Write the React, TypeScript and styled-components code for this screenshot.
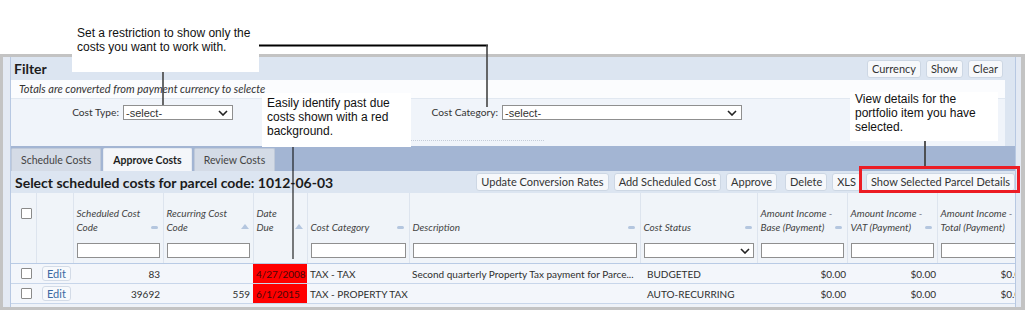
import styled, { createGlobalStyle } from "styled-components";

const GlobalStyle = createGlobalStyle`
  html, body {
    margin: 0;
    padding: 0;
    background: #ffffff;
  }
  body {
    font-family: Lato, "Liberation Sans", sans-serif;
    color: #333;
  }
`;

type SortKind = "dash" | "up" | "none";
type FilterKind = "input" | "select" | "none";

type Column = {
  key: string;
  title: string[];
  width: number;
  sort: SortKind;
  filter: FilterKind;
};

const columns: Column[] = [
  { key: "cb", title: [], width: 25, sort: "none", filter: "none" },
  { key: "edit", title: [], width: 37, sort: "none", filter: "none" },
  { key: "sched", title: ["Scheduled Cost", "Code"], width: 90, sort: "dash", filter: "input" },
  { key: "recur", title: ["Recurring Cost", "Code"], width: 90, sort: "up", filter: "input" },
  { key: "due", title: ["Date", "Due"], width: 54, sort: "up", filter: "none" },
  { key: "cat", title: ["Cost Category"], width: 102, sort: "dash", filter: "input" },
  { key: "desc", title: ["Description"], width: 231, sort: "dash", filter: "input" },
  { key: "status", title: ["Cost Status"], width: 117, sort: "dash", filter: "select" },
  { key: "base", title: ["Amount Income -", "Base (Payment)"], width: 90, sort: "dash", filter: "input" },
  { key: "vat", title: ["Amount Income -", "VAT (Payment)"], width: 90, sort: "dash", filter: "input" },
  { key: "total", title: ["Amount Income -", "Total (Payment)"], width: 90, sort: "dash", filter: "input" },
];

const rows = [
  {
    id: 1,
    sched: "83",
    recur: "",
    due: "4/27/2008",
    cat: "TAX - TAX",
    desc: "Second quarterly Property Tax payment for Parce...",
    status: "BUDGETED",
    base: "$0.00",
    vat: "$0.00",
    total: "$0.00",
  },
  {
    id: 2,
    sched: "39692",
    recur: "559",
    due: "6/1/2015",
    cat: "TAX - PROPERTY TAX",
    desc: "",
    status: "AUTO-RECURRING",
    base: "$0.00",
    vat: "$0.00",
    total: "$0.00",
  },
];

const Chevron = () => (
  <svg width="10" height="6" viewBox="0 0 10 6">
    <path d="M1 1 L5 5 L9 1" fill="none" stroke="#222" strokeWidth="1.6" />
  </svg>
);

const App: React.FC = () => {
  return (
    <Page>
      <GlobalStyle />
      <Frame>
        <Panel>
          <FilterSection>
            <FilterHeader>
              <FilterTitle>Filter</FilterTitle>
              <ButtonGroup>
                <Button>Currency</Button>
                <Button>Show</Button>
                <Button>Clear</Button>
              </ButtonGroup>
            </FilterHeader>
            <InfoRow>Totals are converted from payment currency to selecte</InfoRow>
            <FilterFields>
              <FieldLabel>Cost Type:</FieldLabel>
              <FakeSelect>
                <span>-select-</span>
                <Chevron />
              </FakeSelect>
              <FieldLabel>Cost Category:</FieldLabel>
              <FakeSelect>
                <span>-select-</span>
                <Chevron />
              </FakeSelect>
              <Grip />
            </FilterFields>
          </FilterSection>

          <TabBar>
            <Tab>Schedule Costs</Tab>
            <Tab $active>Approve Costs</Tab>
            <Tab>Review Costs</Tab>
          </TabBar>

          <TitleRow>
            <GridTitle>Select scheduled costs for parcel code: 1012-06-03</GridTitle>
            <ButtonGroup>
              <Button>Update Conversion Rates</Button>
              <Button>Add Scheduled Cost</Button>
              <Button>Approve</Button>
              <Button $gapLeft>Delete</Button>
              <Button>XLS</Button>
              <Button>Show Selected Parcel Details</Button>
            </ButtonGroup>
          </TitleRow>

          <TableWrap>
            <Table>
              <colgroup>
                {columns.map((c) => (
                  <col key={c.key} style={{ width: c.width }} />
                ))}
              </colgroup>
              <thead>
                <tr>
                  {columns.map((c) =>
                    c.key === "cb" ? (
                      <HeadCell key={c.key} $checkbox>
                        <Check />
                      </HeadCell>
                    ) : (
                      <HeadCell key={c.key}>
                        <HeadLabel>
                          <HeadText>
                            {c.title.map((t) => (
                              <div key={t}>{t}</div>
                            ))}
                          </HeadText>
                          {c.sort === "dash" && <SortDash />}
                          {c.sort === "up" && <SortUp />}
                        </HeadLabel>
                        {c.filter === "input" && <FilterInput />}
                        {c.filter === "select" && (
                          <FilterSelect>
                            <Chevron />
                          </FilterSelect>
                        )}
                        {c.filter === "none" && <FilterSpacer />}
                      </HeadCell>
                    ),
                  )}
                </tr>
              </thead>
              <tbody>
                {rows.map((r) => (
                  <tr key={r.id}>
                    <Cell $pad={10}>
                      <Check />
                    </Cell>
                    <Cell $pad={6}>
                      <EditButton>Edit</EditButton>
                    </Cell>
                    <Cell $align="right">{r.sched}</Cell>
                    <Cell $align="right">{r.recur}</Cell>
                    <Cell $pastDue>{r.due}</Cell>
                    <Cell>{r.cat}</Cell>
                    <Cell>{r.desc}</Cell>
                    <Cell $pad={7}>{r.status}</Cell>
                    <Cell $align="right" $amount>{r.base}</Cell>
                    <Cell $align="right" $amount>{r.vat}</Cell>
                    <Cell $align="right" $amount>{r.total}</Cell>
                  </tr>
                ))}
              </tbody>
            </Table>
          </TableWrap>
        </Panel>
      </Frame>

      <Connectors width="1025" height="310" viewBox="0 0 1025 310">
        <line x1="163" y1="72" x2="163" y2="105" stroke="#444" strokeWidth="1.6" />
        <line x1="259" y1="45.5" x2="488" y2="45.5" stroke="#000" strokeWidth="2" />
        <line x1="487" y1="45" x2="487" y2="107" stroke="#444" strokeWidth="1.6" />
        <line x1="293" y1="147" x2="293" y2="259" stroke="#111" strokeWidth="1.1" />
        <line x1="925" y1="137" x2="925" y2="167" stroke="#444" strokeWidth="1.8" />
      </Connectors>

      <Callout $left={72} $top={10} $width={187} $height={62} $padTop={16}>
        Set a restriction to show only the
        <br />
        costs you want to work with.
      </Callout>
      <Callout $left={262} $top={93} $width={149} $height={54} $padTop={3}>
        Easily identify past due
        <br />
        costs shown with a red
        <br />
        background.
      </Callout>
      <Callout $left={850} $top={92} $width={148} $height={49} $padTop={0}>
        View details for the
        <br />
        portfolio item you have
        <br />
        selected.
      </Callout>

      <Highlight />
    </Page>
  );
};

export default App;

// --- Styled Components ---

const Page = styled.div`
  position: relative;
  width: 1025px;
  height: 310px;
  padding-top: 54px;
  box-sizing: border-box;
  overflow: hidden;
`;

const Frame = styled.div`
  height: 256px;
  box-sizing: border-box;
  border: 3px solid #c3c3c3;
  border-right-width: 4px;
  background: #e3e9f3;
  padding: 0 5px 0 7px;
`;

const Panel = styled.div`
  height: 100%;
  box-sizing: border-box;
  border-left: 1px solid #b7c8e2;
  border-right: 1px solid #b7c8e2;
  background: #eef2f8;
  display: flex;
  flex-direction: column;
`;

const FilterSection = styled.div`
  background: #dce5f1;
  padding-right: 10px;
`;

const FilterHeader = styled.div`
  height: 23px;
  display: flex;
  align-items: center;
  padding-left: 3px;
  padding-right: 2px;
`;

const FilterTitle = styled.div`
  font-size: 14px;
  font-weight: 700;
  color: #1d1d1d;
`;

const ButtonGroup = styled.div`
  margin-left: auto;
  display: flex;
  gap: 5px;
`;

const Button = styled.button<{ $gapLeft?: boolean }>`
  height: 18px;
  padding: 0 4px;
  margin-left: ${(p) => (p.$gapLeft ? "3px" : "0")};
  font-family: Lato, "Liberation Sans", sans-serif;
  font-size: 11px;
  color: #333;
  background: #f6f8fb;
  border: 1px solid #cdd7e4;
  border-radius: 3px;
  line-height: 16px;
  cursor: pointer;
`;

const InfoRow = styled.div`
  height: 19px;
  box-sizing: border-box;
  background: #fbfcfe;
  border-bottom: 1px solid #e1e8f1;
  padding-left: 8px;
  font-size: 11px;
  font-style: italic;
  line-height: 18px;
  color: #333;
`;

const FilterFields = styled.div`
  position: relative;
  height: 47px;
  box-sizing: border-box;
  background: #f0f4fa;
  padding-top: 6px;
  display: grid;
  grid-template-columns: 108px 110px 261px 240px;
  column-gap: 4px;
  align-items: start;
`;

const FieldLabel = styled.div`
  text-align: right;
  font-size: 10.2px;
  line-height: 15px;
  color: #333;
`;

const FakeSelect = styled.div`
  height: 15px;
  box-sizing: border-box;
  border: 1px solid #8f8f8f;
  background: #fff;
  display: flex;
  align-items: center;
  justify-content: space-between;
  padding: 0 4px 0 2px;
  font-family: "Liberation Sans", sans-serif;
  font-size: 11px;
  color: #333;
`;

const Grip = styled.div`
  position: absolute;
  left: 300px;
  width: 233px;
  top: 41px;
  border-top: 1px dotted #c4ccd8;
`;

const TabBar = styled.div`
  height: 25px;
  box-sizing: border-box;
  background: #a3b5d3;
  padding-top: 2px;
  display: flex;
  gap: 2px;
`;

const Tab = styled.div<{ $active?: boolean }>`
  height: 23px;
  box-sizing: border-box;
  padding: 0 9px;
  display: flex;
  align-items: center;
  font-size: 10.5px;
  font-weight: ${(p) => (p.$active ? 700 : 400)};
  color: ${(p) => (p.$active ? "#1e1e1e" : "#444")};
  background: ${(p) => (p.$active ? "#f4f6fa" : "#d4dbe6")};
  border: 1px solid ${(p) => (p.$active ? "#e6ebf2" : "#bfc9d9")};
  border-bottom: none;
  border-radius: 2px 2px 0 0;
`;

const TitleRow = styled.div`
  height: 22px;
  display: flex;
  align-items: center;
  padding-left: 4px;
  background: #dce5f1;
`;

const GridTitle = styled.div`
  font-size: 14px;
  font-weight: 700;
  color: #1b1b1b;
`;

const TableWrap = styled.div`
  flex: 1;
  overflow: hidden;
`;

const Table = styled.table`
  width: 1016px;
  table-layout: fixed;
  border-collapse: collapse;
  font-size: 10px;
  color: #2e2e2e;
`;

const HeadCell = styled.th<{ $checkbox?: boolean }>`
  height: 70px;
  box-sizing: border-box;
  vertical-align: top;
  text-align: left;
  font-weight: 400;
  background: #f0f4f9;
  border-right: 1px solid #dde4ee;
  border-bottom: 1px solid #b9cbe5;
  padding: ${(p) => (p.$checkbox ? "15px 0 0 10px" : "13px 3px 5px 3px")};
`;

const HeadLabel = styled.div`
  height: 28px;
  display: flex;
  align-items: flex-end;
  justify-content: space-between;
`;

const HeadText = styled.div`
  font-style: italic;
  font-size: 10px;
  line-height: 14px;
  color: #444;
  white-space: nowrap;
`;

const SortDash = styled.span`
  flex: none;
  width: 7px;
  height: 3px;
  border-radius: 2px;
  background: #b4c6df;
  margin: 0 2px 5px 0;
`;

const SortUp = styled.span`
  flex: none;
  width: 0;
  height: 0;
  border-left: 4px solid transparent;
  border-right: 4px solid transparent;
  border-bottom: 5px solid #b4c6df;
  margin: 0 1px 5px 0;
`;

const FilterInput = styled.div`
  margin-top: 9px;
  height: 15px;
  box-sizing: border-box;
  border: 1px solid #8f8f8f;
  background: #fff;
`;

const FilterSelect = styled(FilterInput)`
  display: flex;
  align-items: center;
  justify-content: flex-end;
  padding-right: 3px;
`;

const FilterSpacer = styled.div`
  margin-top: 9px;
  height: 15px;
`;

const Check = styled.div`
  width: 11px;
  height: 11px;
  box-sizing: border-box;
  border: 1px solid #8a8a8a;
  border-radius: 1px;
  background: #fff;
`;

const Cell = styled.td<{ $align?: "left" | "right"; $pad?: number; $pastDue?: boolean; $amount?: boolean }>`
  height: 20px;
  box-sizing: border-box;
  padding: 0 ${(p) => (p.$amount ? 1 : 3)}px 0 ${(p) => p.$pad ?? 3}px;
  text-align: ${(p) => p.$align ?? "left"};
  white-space: nowrap;
  overflow: hidden;
  background: ${(p) => (p.$pastDue ? "#ff0000" : "#f3f6fb")};
  color: ${(p) => (p.$pastDue ? "#4a0808" : "#2e2e2e")};
  border-bottom: 1px solid #c8d6ea;
`;

const EditButton = styled.button`
  height: 15px;
  padding: 0 4px;
  font-family: Lato, "Liberation Sans", sans-serif;
  font-size: 11px;
  line-height: 13px;
  color: #3b6aa3;
  background: #f7f9fc;
  border: 1px solid #d3dbe7;
  border-radius: 3px;
`;

const Connectors = styled.svg`
  position: absolute;
  left: 0;
  top: 0;
  pointer-events: none;
`;

const Callout = styled.div<{ $left: number; $top: number; $width: number; $height: number; $padTop: number }>`
  position: absolute;
  left: ${(p) => p.$left}px;
  top: ${(p) => p.$top}px;
  width: ${(p) => p.$width}px;
  height: ${(p) => p.$height}px;
  box-sizing: border-box;
  padding: ${(p) => p.$padTop}px 0 0 5px;
  background: #ffffff;
  font-family: "Liberation Sans", Arial, sans-serif;
  font-size: 12px;
  line-height: 14px;
  color: #111;
`;

const Highlight = styled.div`
  position: absolute;
  left: 859px;
  top: 166px;
  width: 161px;
  height: 27px;
  box-sizing: border-box;
  border: 3px solid #ec1c24;
`;
